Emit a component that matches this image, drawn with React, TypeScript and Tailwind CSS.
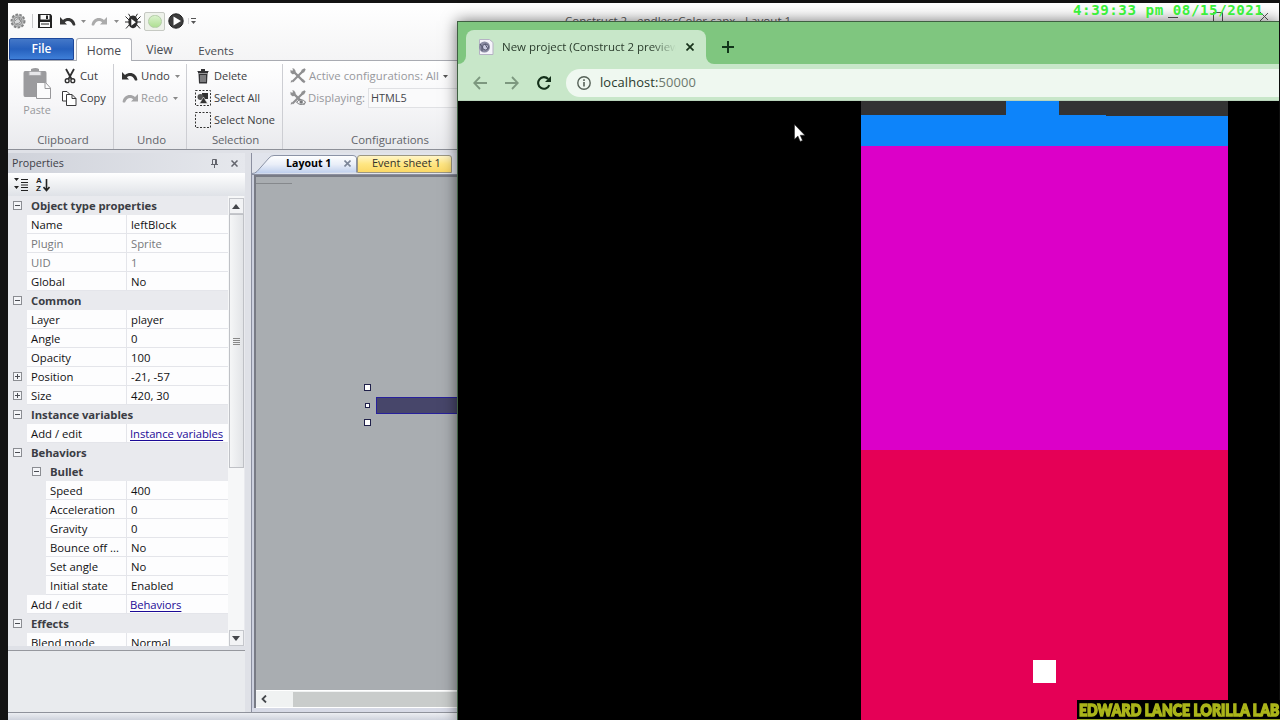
import React from "react";

type Row = {
  kind: "head" | "sub" | "row" | "subrow" | "link";
  name: string;
  value?: string;
  dim?: boolean;
  plus?: boolean;
};

const rows: Row[] = [
  { kind: "head", name: "Object type properties" },
  { kind: "row", name: "Name", value: "leftBlock" },
  { kind: "row", name: "Plugin", value: "Sprite", dim: true },
  { kind: "row", name: "UID", value: "1", dim: true },
  { kind: "row", name: "Global", value: "No" },
  { kind: "head", name: "Common" },
  { kind: "row", name: "Layer", value: "player" },
  { kind: "row", name: "Angle", value: "0" },
  { kind: "row", name: "Opacity", value: "100" },
  { kind: "row", name: "Position", value: "-21, -57", plus: true },
  { kind: "row", name: "Size", value: "420, 30", plus: true },
  { kind: "head", name: "Instance variables" },
  { kind: "link", name: "Add / edit", value: "Instance variables" },
  { kind: "head", name: "Behaviors" },
  { kind: "sub", name: "Bullet" },
  { kind: "subrow", name: "Speed", value: "400" },
  { kind: "subrow", name: "Acceleration", value: "0" },
  { kind: "subrow", name: "Gravity", value: "0" },
  { kind: "subrow", name: "Bounce off ...", value: "No" },
  { kind: "subrow", name: "Set angle", value: "No" },
  { kind: "subrow", name: "Initial state", value: "Enabled" },
  { kind: "link", name: "Add / edit", value: "Behaviors" },
  { kind: "head", name: "Effects" },
  { kind: "row", name: "Blend mode", value: "Normal" },
];

function Box({ plus }: { plus?: boolean }) {
  return (
    <svg width="9" height="9" viewBox="0 0 9 9" className="shrink-0" shapeRendering="crispEdges">
      <rect x=".5" y=".5" width="8" height="8" fill="#f4f5f8" stroke="#8b8d92" />
      <path d={plus ? "M2 4.5h5M4.5 2v5" : "M2 4.5h5"} stroke="#4a4c52" />
    </svg>
  );
}

function PropRow({ r }: { r: Row }) {
  if (r.kind === "head" || r.kind === "sub")
    return (
      <div
        className={`flex h-[19px] shrink-0 items-center bg-[#e9eaee] text-[11.3px] font-bold tracking-[-0.05px] text-[#3b3d44] ${r.kind === "sub" ? "pl-[24px]" : "pl-[5px]"}`}
      >
        <Box />
        <span className="ml-[9px] pt-px">{r.name}</span>
      </div>
    );
  const sub = r.kind === "subrow";
  return (
    <div className={`flex h-[19px] shrink-0 ${r.dim ? "text-[#77797c]" : "text-[#111113]"}`}>
      <div className={`flex shrink-0 items-center pl-[5px] ${sub ? "w-[38px]" : "w-[19px]"}`}>
        {r.plus && <Box plus />}
      </div>
      <div
        className={`flex shrink-0 items-center border-b border-r border-[#e4e5ea] bg-[#fdfdfe] pl-1 pt-[2px] ${sub ? "w-[81px]" : "w-[100px]"}`}
      >
        {r.name}
      </div>
      <div className="flex grow items-center border-b border-[#e4e5ea] bg-[#fdfdfe] pl-1 pt-[2px]">
        {r.kind === "link" ? (
          <span className="-ml-px tracking-[-0.08px] text-[#1c0b96] underline underline-offset-2">{r.value}</span>
        ) : (
          r.value
        )}
      </div>
    </div>
  );
}

function UndoArrow({ className, flip }: { className: string; flip?: boolean }) {
  return (
    <svg width="16" height="10" viewBox="0 0 16 10" className={`shrink-0 ${className} ${flip ? "-scale-x-100" : ""}`}>
      <path d="M0 1v7.5h7L4.8 6.2C7.5 4 11 4.500 13 9.500c.5.300 2.200 0 2.400-.8C14.500 2.500 8 0 3 4z" fill="currentColor" />
    </svg>
  );
}

function Caret({ className }: { className: string }) {
  return (
    <svg width="5" height="3" viewBox="0 0 5 3" className={className}>
      <path d="M0 0h5L2.500 3z" fill="currentColor" />
    </svg>
  );
}

function Tools({ eye }: { eye?: boolean }) {
  return (
    <svg width="16" height="16" viewBox="0 0 16 16" className="shrink-0 text-[#8f8f91]">
      <path d="M2.500 2.500 13.500 13.500" stroke="currentColor" strokeWidth="2.400" />
      <path d="M12.500 3.500 2.500 13.500" stroke="currentColor" strokeWidth="2.200" />
      <path d="M.5 1.800v2.800l1.800 1.700 2.400-.4L5.700 3 4 .6 2 .5l1.700 2L3 3.500zM1.500 12l-1 2.500L3 14zM10.500 5.500l1.200-3.700L14.500.3l1.200 1.200-1.500 2.800-3.300 1.500z" fill="currentColor" />
      <path d="M11 12.500l1.500-1.700L15.500 13.500 14 15.300z" fill="currentColor" />
      {eye && (
        <g>
          <path d="M6.500 12.200q4.500-5 9.200 0-4.500 4.600-9.200 0z" fill="#f6f6f8" stroke="#77787b" />
          <circle cx="11.200" cy="12" r="1.700" fill="#77787b" />
        </g>
      )}
    </svg>
  );
}

function Bug() {
  return (
    <svg width="16" height="16" viewBox="0 0 16 16" className="text-[#2d2d2d]">
      <path d="M5.500 4 3.500.8M10.500 4l2-3.200M4 7 .5 3.500M12 7l3.500-3.500M4 9H0M12 9h4M4.500 11.500l-3.500 4M11.500 11.500l3.500 4" stroke="currentColor" strokeWidth="1" />
      <path d="M8 2.500c3 0 4.600 3.200 4.600 6.300S11 15.200 8 15.200 3.400 12.100 3.400 8.800 5 2.500 8 2.500z" fill="currentColor" />
      <path d="M6.300 5.800 10.800 9.300 6.300 12.800z" fill="#fff" />
    </svg>
  );
}

function QuickAccess() {
  return (
    <div className="flex h-[35px] shrink-0 items-center pt-px">
      <svg width="16" height="16" viewBox="0 0 16 16" className="ml-[2px]">
        <circle cx="8" cy="8" r="6.500" fill="#b9babb" stroke="#838485" strokeWidth="2" strokeDasharray="2.500 1.400" />
        <circle cx="8" cy="8" r="4" fill="#d7d8d9" stroke="#929394" />
        <path d="M5 8q3-4 5-1t-4 4M9 4l2 5" stroke="#8a8b8c" fill="none" />
      </svg>
      <div className="ml-[6px] h-[14px] w-px bg-[#c9c9cb]" />
      <svg width="14" height="14" viewBox="0 0 14 14" className="ml-[5px] text-[#222]">
        <path d="M0 0h12.500L14 1.500V14H0z" fill="currentColor" />
        <path d="M2.500 1h9v4.500h-9zM2 8h10v5H2z" fill="#fbfbfb" />
        <path d="M8 1.500h2V5H8zM3 9.500h8v1H3z" fill="currentColor" />
      </svg>
      <UndoArrow className="ml-2 text-[#353535]" />
      <Caret className="ml-[5px] text-[#8b8b8b]" />
      <UndoArrow flip className="ml-[5px] text-[#ababab]" />
      <Caret className="ml-[7px] text-[#8b8b8b]" />
      <div className="ml-[6px]"><Bug /></div>
      <div className="ml-[3px] flex h-[19px] w-[21px] items-center justify-center rounded-[2px] border border-[#c6c9c3] bg-[#eef2ea]">
        <div className="h-[13px] w-[14px] rounded-full border border-[#b3cda6] bg-gradient-to-b from-[#d9f2cb] to-[#afdf93]" />
      </div>
      <svg width="16" height="16" viewBox="0 0 16 16" className="ml-[3px]">
        <circle cx="8" cy="8" r="7.200" fill="#3c3c3c" stroke="#222" />
        <path d="M5.500 3.500 13 8l-7.500 4.500z" fill="#fff" />
      </svg>
      <div className="ml-[4px] flex flex-col items-center gap-[2px] border-l border-[#d5d5d7] pl-[2px] text-[#555]">
        <div className="h-px w-[5px] bg-[#555]" />
        <Caret className="" />
      </div>
    </div>
  );
}

function Tabs() {
  return (
    <div className="flex h-[23px] shrink-0 border-b border-[#a9abb2] text-[12.2px] text-[#4a4c52]">
      <div className="ml-px flex h-[22px] w-[65px] items-center justify-center rounded-t-[2px] border border-[#1c479b] bg-gradient-to-b from-[#4478c8] via-[#2660bd] to-[#3f7fd8] text-[12px] font-semibold text-white">
        File
      </div>
      <div className="ml-[2px] flex h-[23px] w-[56px] items-center justify-center rounded-t-[3px] border border-b-0 border-[#b2b4ba] bg-white pt-[2px]">
        Home
      </div>
      <div className="ml-[14px] flex w-[27px] items-center justify-center pt-[3px]">View</div>
      <div className="ml-[25px] flex w-[36px] items-center justify-center pt-[3px] text-[11.6px]">Events</div>
    </div>
  );
}

function Ribbon() {
  const group = "flex shrink-0 flex-col border-r border-[#cdced3]";
  const label = "mt-auto flex h-[20px] items-center justify-center pt-px text-[#62646a] text-[11.4px]";
  return (
    <div className="flex h-[89px] shrink-0 border-b border-[#8d9098] bg-gradient-to-b from-white via-[#f6f6f8] to-[#e9eaed] pt-[3px] text-[11.3px] text-[#3c3d41]">
      <div className={`${group} w-[106px]`}>
        <div className="flex pt-[4px]">
          <div className="ml-[14px] flex w-[30px] flex-col items-center text-[#98999c]">
            <svg width="28" height="31" viewBox="0 0 28 31">
              <path d="M2 3h6V1q5-2 8 0v2h6q1.500 0 1.500 2v22q0 2-1.500 2H2Q.5 29 .5 27V5q0-2 1.500-2z" fill="#9b9b9e" />
              <path d="M6 3.500h12v4H6z" fill="#e6e6e9" stroke="#aaaaad" />
              <path d="M13.500 14.500h9l5 5.500v10.500h-14z" fill="#fbfbfc" stroke="#98989b" />
              <path d="M22 14.500v6h5.500" fill="none" stroke="#98989b" />
            </svg>
            <span className="mt-[3px] text-[10.8px] leading-[16px]">Paste</span>
          </div>
          <div className="ml-[10px] flex flex-col gap-[6px]">
            <div className="flex h-4 items-center">
              <svg width="16" height="16" viewBox="0 0 16 16" className="text-[#2f2f30]">
                <path d="M4 1 9.500 11M12 1 6.500 11" stroke="currentColor" strokeWidth="1.800" />
                <circle cx="5.200" cy="12.700" r="1.900" fill="none" stroke="currentColor" strokeWidth="1.400" />
                <circle cx="10.800" cy="12.700" r="1.900" fill="none" stroke="currentColor" strokeWidth="1.400" />
              </svg>
              <span className="ml-[2px]">Cut</span>
            </div>
            <div className="flex h-4 items-center">
              <svg width="15" height="16" viewBox="0 0 15 16" className="text-[#3a3a3c]">
                <path d="M.5 1.500H5L8 4.500V11H.5z" fill="#fff" stroke="currentColor" />
                <path d="M4.500 4.500H10l4 4v7H4.500zM10 4.500v4h4" fill="#fff" stroke="currentColor" />
              </svg>
              <span className="ml-[3px] text-[11px]">Copy</span>
            </div>
          </div>
        </div>
        <div className={`${label} pl-[5px]`}>Clipboard</div>
      </div>
      <div className={`${group} w-[73px]`}>
        <div className="flex flex-col gap-[6px] pl-[8px] pt-[4px]">
          <div className="flex h-4 items-center">
            <UndoArrow className="text-[#333]" />
            <span className="ml-[3px]">Undo</span>
            <Caret className="ml-[5px] text-[#888]" />
          </div>
          <div className="flex h-4 items-center text-[#9a9b9e]">
            <UndoArrow flip className="text-[#a5a5a7]" />
            <span className="ml-[3px]">Redo</span>
            <Caret className="ml-[5px] text-[#888]" />
          </div>
        </div>
        <div className={`${label} pl-[3px]`}>Undo</div>
      </div>
      <div className={`${group} w-[96px]`}>
        <div className="flex flex-col gap-[6px] pl-[8px] pt-[4px]">
          <div className="flex h-4 items-center">
            <svg width="16" height="16" viewBox="0 0 16 16" className="text-[#343436]">
              <path d="M3 4h10v1.500H3zM6 3V1h4v2h3.500v1H2.500V3zM3.500 6h9l-.5 9.500H4z" fill="currentColor" />
              <path d="M6 7v7M8 7v7M10 7v7" stroke="#c5c5c7" />
            </svg>
            <span className="ml-[3px] text-[11px]">Delete</span>
          </div>
          <div className="flex h-4 items-center">
            <svg width="16" height="16" viewBox="0 0 16 16">
              <rect x=".5" y=".5" width="15" height="15" fill="none" stroke="#333" strokeDasharray="2 1.500" />
              <path d="M7 3h6v6H7z" fill="#333" />
              <circle cx="5.500" cy="7" r="3" fill="#555" />
              <path d="M8.500 7 12.500 13.500h-8z" fill="#333" stroke="#eee" strokeWidth=".6" />
            </svg>
            <span className="ml-[3px] text-[11.1px]">Select All</span>
          </div>
          <div className="flex h-4 items-center">
            <svg width="16" height="16" viewBox="0 0 16 16">
              <rect x=".5" y=".5" width="15" height="15" fill="none" stroke="#333" strokeDasharray="2 1.500" />
            </svg>
            <span className="ml-[3px] text-[11px]">Select None</span>
          </div>
        </div>
        <div className={`${label} pl-[2px] tracking-[-0.1px]`}>Selection</div>
      </div>
      <div className="flex w-[214px] shrink-0 flex-col">
        <div className="flex flex-col gap-[2px] pl-[7px] pt-[2px] text-[#97989c]">
          <div className="flex h-5 items-center">
            <Tools />
            <span className="ml-[3px] tracking-[0.04px]">Active configurations: All</span>
            <Caret className="ml-[4px] text-[#555]" />
          </div>
          <div className="flex h-5 items-center">
            <Tools eye />
            <span className="ml-[2px] w-[60px]">Displaying:</span>
            <div className="flex h-5 grow items-center border border-r-0 border-[#e0e1e4] bg-[#fafafb] pl-[2px] text-[10.900px] text-[#44454a]">HTML5</div>
          </div>
        </div>
        <div className={label}>Configurations</div>
      </div>
    </div>
  );
}

function PropertiesPanel() {
  return (
    <div className="flex w-[237px] shrink-0 flex-col text-[11.3px]">
      <div className="flex h-[20px] shrink-0 items-center bg-gradient-to-r from-[#cfd2da] to-[#e6e8ed] pl-1 text-[#3e4047]">
        <span className="text-[10.700px]">Properties</span>
        <svg width="7" height="9" viewBox="0 0 7 9" className="ml-auto" fill="none" stroke="#63656d">
          <path d="M1.500 5V.5h4V5M0 5.500h7M3.500 5.500V9M4.500 1v4" />
        </svg>
        <svg width="7" height="7" viewBox="0 0 7 7" className="ml-[13px] mr-[7px]" stroke="#63656d" strokeWidth="1.500">
          <path d="M.5.5l6 6M6.500.5l-6 6" />
        </svg>
      </div>
      <div className="flex h-[23px] shrink-0 items-center bg-gradient-to-b from-white to-[#dfe2e7] pl-[6px] pt-px">
        <svg width="14" height="14" viewBox="0 0 14 14" className="text-[#222]">
          <path d="M0 0h5L2.500 3zM0 8h5l-2.500 3z" fill="currentColor" />
          <path d="M7 1.500h7M7 4.500h7M7 9.500h7M7 12.500h7M7 7h7" stroke="currentColor" strokeWidth="1" />
        </svg>
        <div className="ml-[8px] flex flex-col font-['Liberation_Sans',sans-serif] text-[8px] font-bold leading-[8px] text-[#222]">
          <span>A</span>
          <span>Z</span>
        </div>
        <svg width="7" height="13" viewBox="0 0 7 13" className="ml-px">
          <path d="M3.500 0v11M.5 8l3 3.500 3-3.500" stroke="#222" strokeWidth="1.600" fill="none" />
        </svg>
      </div>
      <div className="flex h-[450px] shrink-0 bg-[#e9eaee]">
        <div className="flex w-[220px] flex-col overflow-hidden">
          {rows.map((r, i) => (
            <PropRow key={i} r={r} />
          ))}
        </div>
        <div className="flex w-[16px] flex-col items-center bg-[#f6f7f8]">
          <div className="mt-[2px] flex h-4 w-[15px] shrink-0 items-center justify-center border border-[#c5c7cc] bg-[#f2f3f5] text-[#44464b]">
            <svg width="8" height="5" viewBox="0 0 8 5"><path d="M0 5h8L4 0z" fill="currentColor" /></svg>
          </div>
          <div className="flex h-[254px] w-[15px] shrink-0 flex-col items-center justify-center gap-px border border-[#bfc1c6] bg-gradient-to-r from-[#f5f6f7] to-[#e2e4e7]">
            <div className="h-px w-[7px] bg-[#888]" />
            <div className="h-px w-[7px] bg-[#888]" />
            <div className="h-px w-[7px] bg-[#888]" />
            <div className="h-px w-[7px] bg-[#888]" />
          </div>
          <div className="mt-auto flex h-4 w-[15px] shrink-0 items-center justify-center border border-[#c5c7cc] bg-[#f2f3f5] text-[#44464b]">
            <svg width="8" height="5" viewBox="0 0 8 5"><path d="M0 0h8L4 5z" fill="currentColor" /></svg>
          </div>
        </div>
      </div>
      <div className="mt-[4px] grow border-t border-[#96989e] bg-[#e9ebee]" />
    </div>
  );
}

function LayoutPanel() {
  return (
    <div className="ml-[6px] flex grow flex-col border-l border-[#8b8fa0] bg-[#ccd0de]">
      <div className="relative flex h-[22px] shrink-0 items-end border-b border-[#8b8fa0] bg-[#e1e4ec] text-[11.3px]">
        <svg width="204" height="22" viewBox="0 0 204 22" className="absolute -bottom-px left-0">
          <defs>
            <linearGradient id="tabBlue" x1="0" y1="0" x2="0" y2="1">
              <stop offset="0" stopColor="#fff" />
              <stop offset=".5" stopColor="#e9eef8" />
              <stop offset="1" stopColor="#bccdec" />
            </linearGradient>
            <linearGradient id="tabYellow" x1="0" y1="0" x2="0" y2="1">
              <stop offset="0" stopColor="#fff6cc" />
              <stop offset=".5" stopColor="#ffe682" />
              <stop offset="1" stopColor="#fbd765" />
            </linearGradient>
          </defs>
          <path d="M105.500 19.500V5q0-2.500 2.500-2.500h89q2.500 0 2.500 2.500v14.500z" fill="url(#tabYellow)" stroke="#9c9782" />
          <path d="M0 20.500q3 0 5-2L17 5q2-2.500 5-2.500h79q3 0 3.500 2.500v14.500z" fill="url(#tabBlue)" />
          <path d="M0 20.500q3 0 5-2L17 5q2-2.500 5-2.500h79q3 0 3.500 2.500v14.500" fill="none" stroke="#8b93a6" />
        </svg>
        <div className="relative flex h-[21px] w-full items-center">
          <span className="ml-[34px] w-[58px] text-[10.600px] font-bold text-black">Layout 1</span>
          <svg width="7" height="7" viewBox="0 0 7 7" stroke="#7c8698" strokeWidth="1.600"><path d="M.5.5l6 6M6.500.5l-6 6" /></svg>
          <span className="ml-[21px] text-[11px] text-[#33302a]">Event sheet 1</span>
        </div>
      </div>
      <div className="ml-[2px] flex grow flex-col border-l-2 border-t-2 border-[#787b85] bg-[#a9adb1]">
        <div className="relative grow">
          <div className="absolute left-0 top-[6px] h-px w-[36px] bg-[#85888c]" />
          <div className="absolute left-[120px] top-[220px] h-[17px] w-[90px] border border-r-0 border-[#27209c] bg-[#47466a]" />
          <div className="absolute left-[108px] top-[207px] h-[7px] w-[7px] border border-[#20204a] bg-white" />
          <div className="absolute left-[109px] top-[226px] h-[5px] w-[5px] border border-[#20204a] bg-white" />
          <div className="absolute left-[108px] top-[242px] h-[7px] w-[7px] border border-[#20204a] bg-white" />
        </div>
        <div className="flex h-[18px] shrink-0 items-center border-y border-white bg-[#f0f2f2]">
          <svg width="6" height="8" viewBox="0 0 6 8" className="ml-[5px]"><path d="M5 .5 1.500 4 5 7.500" stroke="#44474b" strokeWidth="1.800" fill="none" /></svg>
          <div className="ml-[26px] h-[15px] grow bg-[#c9cccb]" />
        </div>
      </div>
      <div className="h-[4px] shrink-0 bg-[#d7dae6]" />
    </div>
  );
}

function Browser() {
  return (
    <div className="absolute left-[457px] top-[21px] flex h-[700px] w-[822px] flex-col border-l border-t border-[#3f5f42] bg-black shadow-[0_0_14px_rgba(0,0,0,0.55)]">
      <div className="flex h-[42px] shrink-0 items-end bg-[#7fc67f]">
        <div className="h-2 w-2 bg-[#c8e7c9]"><div className="h-2 w-2 rounded-br-lg bg-[#7fc67f]" /></div>
        <div className="flex h-[34px] w-[240px] items-center rounded-t-lg bg-[#c8e7c9] pl-[12px]">
          <svg width="16" height="16" viewBox="0 0 16 16">
            <path d="M1.500.5h10l3.500 3v12H1.500z" fill="#f5f4fa" stroke="#b5b2c4" />
            <circle cx="6.500" cy="8" r="5.500" fill="#8b8ca3" />
            <circle cx="7.500" cy="8" r="3" fill="#c9cae0" stroke="#55566e" />
            <path d="M2 5q3 2 2 7M7 5l3 5" stroke="#4f5068" fill="none" />
          </svg>
          <div className="ml-[8px] w-[174px] overflow-hidden whitespace-nowrap text-[11.5px] tracking-[-0.03px] text-[#2b3d2d] [mask-image:linear-gradient(to_right,black_86%,transparent)]">
            New project (Construct 2 preview)
          </div>
          <svg width="8" height="8" viewBox="0 0 8 8" className="ml-[10px]" stroke="#18321b" strokeWidth="1.700"><path d="M.5.5l7 7M7.500.5l-7 7" /></svg>
        </div>
        <div className="h-2 w-2 bg-[#c8e7c9]"><div className="h-2 w-2 rounded-bl-lg bg-[#7fc67f]" /></div>
        <svg width="12" height="12" viewBox="0 0 12 12" className="mb-[11px] ml-[8px]" stroke="#12351a" strokeWidth="2"><path d="M6 0v12M0 6h12" /></svg>
      </div>
      <div className="flex h-[37px] shrink-0 items-center border-b border-[#b9d4bb] bg-[#c8e7c9] pt-px">
        <svg width="14" height="14" viewBox="0 0 14 14" className="ml-[15px]" stroke="#7d987f" strokeWidth="1.800" fill="none"><path d="M14 7H1.500M7 1 1.200 7 7 13" /></svg>
        <svg width="14" height="14" viewBox="0 0 14 14" className="ml-[18px]" stroke="#7d987f" strokeWidth="1.800" fill="none"><path d="M0 7h12.500M7 1l5.800 6L7 13" /></svg>
        <svg width="14" height="14" viewBox="0 0 14 14" className="ml-[18px]"><path d="M12.300 9.200A5.800 5.800 0 1 1 11.200 3" stroke="#14301a" strokeWidth="2.100" fill="none" /><path d="M14 0v6H8z" fill="#14301a" /></svg>
        <div className="ml-[15px] flex h-[28px] grow items-center rounded-l-full bg-[#eff8f0] pl-[11px] text-[12.9px]">
          <svg width="14" height="14" viewBox="0 0 14 14"><circle cx="7" cy="7" r="6.200" fill="none" stroke="#566258" strokeWidth="1.400" /><path d="M7 6v4.500M7 3.300v1.600" stroke="#566258" strokeWidth="1.600" /></svg>
          <span className="ml-[9px] tracking-[0.12px] text-[#2a3a2d]">localhost:<span className="text-[#6c786e]">50000</span></span>
        </div>
      </div>
      <div className="flex grow justify-end bg-black pr-[51px]">
        <div className="relative flex w-[367px] flex-col overflow-hidden bg-[#e50056]">
          <div className="flex h-[45px] shrink-0 items-start bg-[#0d84fa]">
            <div className="h-[14px] w-[145px] bg-[#333333]" />
            <div className="ml-[53px] h-[14px] w-[47px] bg-[#333333]" />
            <div className="h-[15px] grow bg-[#333333]" />
          </div>
          <div className="h-[304px] shrink-0 bg-[#dc00c8]" />
          <div className="absolute left-[172px] top-[559px] h-[23px] w-[23px] bg-white" />
        </div>
      </div>
      <svg width="11" height="18" viewBox="0 0 11 18" className="absolute left-[336px] top-[102px]">
        <path d="M.5.5v14.700l3.400-3.200 2.300 5.400 2.300-1-2.300-5.200h4.600z" fill="#fff" stroke="#222" strokeWidth=".5" />
      </svg>
    </div>
  );
}

export default function App() {
  return (
    <div className="relative h-[720px] w-[1280px] overflow-hidden whitespace-nowrap bg-[#131313] font-['Open_Sans','Noto_Sans',sans-serif]">
      <div className="absolute left-[8px] top-[3px] flex h-[717px] w-[1271px] flex-col bg-[#dfe1e7]">
        <div className="flex h-[58px] shrink-0 flex-col bg-gradient-to-b from-white to-[#f4f4f5]">
          <QuickAccess />
          <Tabs />
        </div>
        <Ribbon />
        <div className="flex h-[562px] shrink-0 pt-[3px]">
          <PropertiesPanel />
          <LayoutPanel />
        </div>
        <div className="grow border-t border-[#8f929b] bg-gradient-to-b from-[#eceef2] to-[#cfd3dd]" />
      </div>
      <div className="absolute left-[565px] top-[12px] text-[11.600px] leading-[17px] text-[#5a5a5a]">Construct 2 - endlessColor.capx - Layout 1</div>
      <svg width="100" height="12" viewBox="0 0 100 12" className="absolute left-[1168px] top-[11px]" fill="none" stroke="#555">
        <path d="M0 6.500h10M45.500 12V1.500h9V12M92 1l10 10M101 1 91 11" />
      </svg>
      <Browser />
      <div className="absolute left-[1073px] top-[2px] whitespace-pre font-['DejaVu_Sans_Mono',monospace] text-[14.200px] font-bold leading-[17px] tracking-[0.53px] text-[#3bf03b]">4:39:33 pm 08/15/2021</div>
      <div className="absolute left-[1077px] top-[700px] flex h-[20px] w-[203px] items-center overflow-hidden border-b border-[#97a32a] bg-black pl-[2px]">
        <span className="origin-left scale-x-[0.87] font-['Lato',sans-serif] text-[16px] font-black tracking-[0.1px] text-[#abb51a] [-webkit-text-stroke:1.500px_#abb51a]">EDWARD LANCE LORILLA LAB</span>
      </div>
    </div>
  );
}
